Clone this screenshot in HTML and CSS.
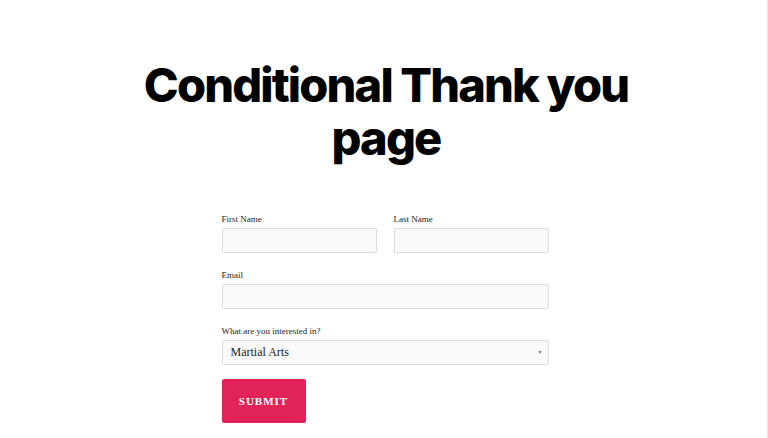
FILE: index.html
```html
<!DOCTYPE html>
<html>
<head>
<meta charset="utf-8">
<link rel="stylesheet" href="styles.css">
</head>
<body>
<div class="page">
  <h1 class="title">Conditional Thank you page</h1>
  <form class="form">
    <div class="row">
      <div class="field">
        <label class="label">First Name</label>
        <input class="input" type="text">
      </div>
      <div class="field">
        <label class="label">Last Name</label>
        <input class="input" type="text">
      </div>
    </div>
    <div class="field">
      <label class="label">Email</label>
      <input class="input" type="text">
    </div>
    <div class="field">
      <label class="label">What are you interested in?</label>
      <div class="select">
        <span class="select-value">Martial Arts</span>
        <span class="caret"></span>
      </div>
    </div>
    <button class="submit" type="button">SUBMIT</button>
  </form>
</div>
</body>
</html>
```

FILE: styles.css
```css
html, body {
  margin: 0;
  padding: 0;
  background: #fff;
}
body {
  height: 438px;
  overflow: hidden;
}
.page {
  box-sizing: border-box;
  height: 438px;
  border-right: 1px solid #e6e6e6;
  padding-top: 58px;
  padding-left: 3px;
  display: flex;
  flex-direction: column;
  align-items: center;
}
.title {
  margin: 0;
  padding-left: 2px;
  width: 520px;
  text-align: center;
  font-family: Inter, "Liberation Sans", sans-serif;
  font-weight: 800;
  font-size: 47px;
  line-height: 53px;
  letter-spacing: -1.85px;
  color: #000;
}
.form {
  margin-top: 50px;
  width: 327px;
  display: flex;
  flex-direction: column;
  gap: 17px;
  font-family: "Liberation Serif", serif;
}
.row {
  display: flex;
  gap: 17px;
}
.row .field {
  flex: 1;
}
.field {
  display: flex;
  flex-direction: column;
}
.label {
  font-size: 9px;
  line-height: 11px;
  color: #222;
  margin-bottom: 3px;
}
.input {
  box-sizing: border-box;
  height: 25px;
  width: 100%;
  margin: 0;
  border: 1px solid #dcdcdc;
  border-radius: 2px;
  background: #fafafa;
  outline: none;
}
.select {
  box-sizing: border-box;
  height: 25px;
  border: 1px solid #dcdcdc;
  border-radius: 2px;
  background: #fafafa;
  display: flex;
  align-items: center;
  justify-content: space-between;
  padding: 0 6px 0 8px;
}
.select-value {
  font-size: 12px;
  color: #222;
}
.caret {
  width: 0;
  height: 0;
  border-left: 2.5px solid transparent;
  border-right: 2.5px solid transparent;
  border-top: 3px solid #999;
}
.submit {
  margin-top: -3px;
  align-self: flex-start;
  width: 84px;
  height: 44px;
  border: none;
  border-radius: 2px;
  background: #e2235a;
  color: #fff;
  font-family: "Liberation Serif", serif;
  font-weight: bold;
  font-size: 11px;
  letter-spacing: 1px;
  padding: 0;
}
```
